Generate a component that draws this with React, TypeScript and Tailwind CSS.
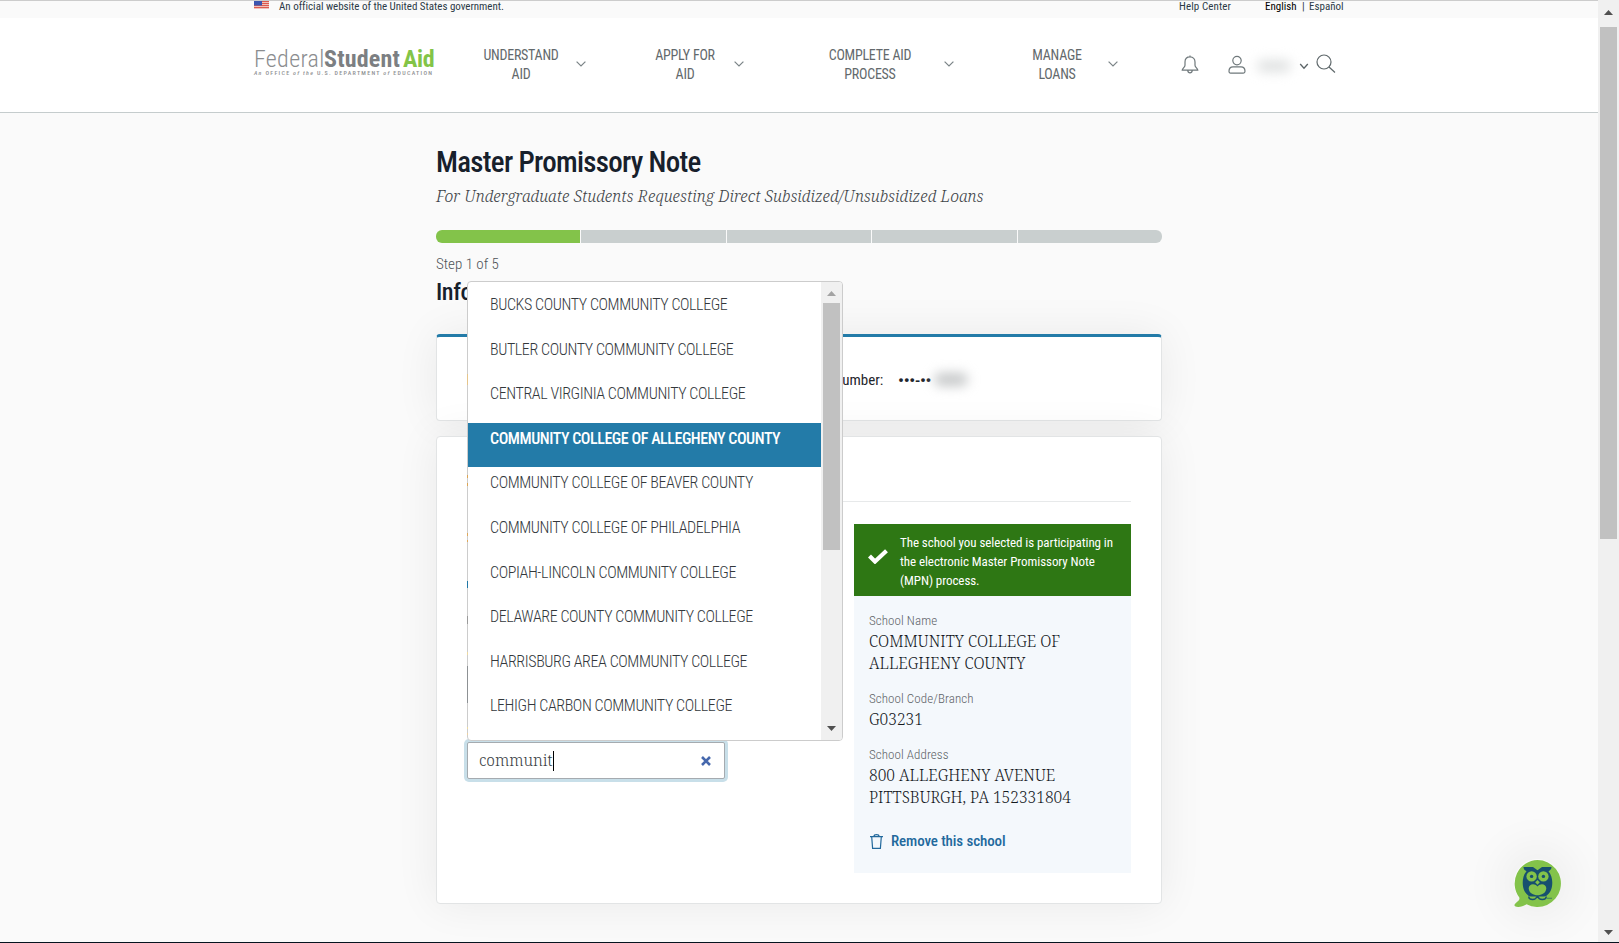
import * as React from "react";
import clsx from "clsx";

const SANS = "font-['Roboto_Condensed','Liberation_Sans',sans-serif]";
const SERIF = "font-['Noto_Serif','DejaVu_Serif_Condensed',serif]";

const NAV = [
  { lines: ["UNDERSTAND", "AID"], className: "ml-[47px] w-[78px]", chevron: "ml-[16px]" },
  { lines: ["APPLY FOR", "AID"], className: "ml-[60px] w-[78px]", chevron: "ml-[10px]" },
  { lines: ["COMPLETE AID", "PROCESS"], className: "ml-[82px] w-[88px]", chevron: "ml-[30px]" },
  { lines: ["MANAGE", "LOANS"], className: "ml-[73px] w-[60px]", chevron: "ml-[21px]" },
];

const SCHOOLS = [
  "BUCKS COUNTY COMMUNITY COLLEGE",
  "BUTLER COUNTY COMMUNITY COLLEGE",
  "CENTRAL VIRGINIA COMMUNITY COLLEGE",
  "COMMUNITY COLLEGE OF ALLEGHENY COUNTY",
  "COMMUNITY COLLEGE OF BEAVER COUNTY",
  "COMMUNITY COLLEGE OF PHILADELPHIA",
  "COPIAH-LINCOLN COMMUNITY COLLEGE",
  "DELAWARE COUNTY COMMUNITY COLLEGE",
  "HARRISBURG AREA COMMUNITY COLLEGE",
  "LEHIGH CARBON COMMUNITY COLLEGE",
];

const SELECTED = "COMMUNITY COLLEGE OF ALLEGHENY COUNTY";

function Chevron({ className }: { className?: string }) {
  return (
    <svg viewBox="0 0 10 6" className={clsx("h-[6px] w-[10px] shrink-0", className)} fill="none" stroke="#7b8487" strokeWidth="1.2">
      <path d="M0.6 0.6 5 5 9.4 0.6" />
    </svg>
  );
}

function Triangle({ up, color }: { up?: boolean; color: string }) {
  return (
    <svg viewBox="0 0 9 5" className="h-[5px] w-[9px]" fill={color}>
      <path d={up ? "M4.5 0 9 5H0z" : "M0 0H9L4.5 5z"} />
    </svg>
  );
}

function Flag() {
  return (
    <svg viewBox="0 0 15 8" className="h-[8px] w-[15px]">
      <rect width="15" height="8" fill="#f4dcd8" />
      {[0, 2, 4, 6].map((y) => (
        <rect key={y} y={y} width="15" height="1.2" fill="#dd5a4e" />
      ))}
      <rect width="8" height="4.5" fill="#3c56b0" />
    </svg>
  );
}

function UtilityBar() {
  return (
    <div className={clsx(SANS, "flex h-[18px] border-t border-[#cccccc] bg-[#fafafa] pl-[254px] text-[11px] leading-[11px] text-[#2c3a47]")}>
      <Flag />
      <span className="ml-[10px] w-[900px] tracking-[-0.02px]">An official website of the United States government.</span>
      <span className="w-[86px] tracking-[0.1px]">Help Center</span>
      <span className="w-[37px] text-black">English</span>
      <span className="w-[7px]">|</span>
      <span>Español</span>
    </div>
  );
}

function Logo() {
  return (
    <div className={clsx(SANS, "w-[181px] pt-[28px]")}>
      <div className="flex h-[24px] items-baseline text-[24px] leading-[26px] text-[#8b8d8f]">
        <span className="w-[70px] font-light tracking-[0.3px]">Federal</span>
        <span className="w-[79px] font-bold tracking-[0.2px] text-[#7c7f82]">Student</span>
        <span className="font-bold tracking-[-0.3px] text-[#83c447]">Aid</span>
      </div>
      <div className="text-[6px] leading-[6px] font-medium tracking-[1.28px] whitespace-nowrap text-[#8f9193]">
        <i>An</i> OFFICE <i>of the</i> U.S. DEPARTMENT <i>of</i> EDUCATION
      </div>
    </div>
  );
}

function Header() {
  return (
    <header className="flex h-[95px] items-start border-b border-[#c5cccd] bg-white pl-[254px]">
      <Logo />
      {NAV.map((item) => (
        <div key={item.lines[0]} className="flex items-start">
          <div
            className={clsx(
              SANS,
              "pt-[28px] text-center text-[14px] leading-[19px] tracking-[-0.25px] whitespace-nowrap text-[#63696c]",
              item.className,
            )}
          >
            {item.lines.map((line) => (
              <div key={line}>{line}</div>
            ))}
          </div>
          <Chevron className={clsx("mt-[43px]", item.chevron)} />
        </div>
      ))}
      <svg viewBox="0 0 18 20" className="mt-[37px] ml-[63px] h-[20px] w-[18px]" fill="none" stroke="#6f787b" strokeWidth="1.2">
        <path d="M9 1.9C5.8 1.9 4 4 4 7v3.200c0 2-2.800 3.200-2.800 5h15.600c0-1.800-2.800-3-2.800-5V7c0-3-1.800-5.100-5-5.100zM9 .6v1.300M6.800 15.600c.3 3 4.100 3 4.400 0" />
      </svg>
      <svg viewBox="0 0 18 20" className="mt-[37px] ml-[29px] h-[20px] w-[18px]" fill="none" stroke="#6f787b" strokeWidth="1.2">
        <circle cx="9" cy="5.6" r="4.2" />
        <path d="M1 16.300c0-2.600 1.600-4.500 4-4.500h8c2.400 0 4 1.900 4 4.500 0 1.200-.6 1.800-1.600 1.800H2.600c-1 0-1.600-.6-1.600-1.800z" />
      </svg>
      <div className="mt-[42px] ml-[11px] h-[12px] w-[34px] rounded-full bg-[#dfe1e1] blur-[6px]" />
      <svg viewBox="0 0 10 7" className="mt-[45px] ml-[8px] h-[7px] w-[10px]" fill="none" stroke="#5b6467" strokeWidth="1.3">
        <path d="M1.2 1 5 5.3 8.8 1" />
      </svg>
      <svg viewBox="0 0 20 20" className="mt-[36px] ml-[7px] size-[20px]" fill="none" stroke="#5f686b" strokeWidth="1.2">
        <circle cx="8" cy="8" r="7" />
        <path d="m13 13 6 5.5" />
      </svg>
    </header>
  );
}

function Progress() {
  return (
    <div className="mt-[23px] flex h-[13px] gap-px overflow-hidden rounded-[6px]">
      <div className="flex-1 bg-[#83c34a]" />
      {[2, 3, 4, 5].map((step) => (
        <div key={step} className="flex-1 bg-[#c9cfcf]" />
      ))}
    </div>
  );
}

// slivers of the form that stay visible along the left edge of the open menu
const EDGES = [
  "top-[92px] h-[11px] bg-[#e6c58a]",
  "top-[193px] h-[3px] bg-[#dda552]",
  "top-[201px] h-[3px] bg-[#dda552]",
  "top-[251px] h-[3px] bg-[#dfa85a]",
  "top-[258px] h-[2px] bg-[#dfa85a]",
  "top-[299px] h-[7px] bg-[#1f77a6]",
  "top-[334px] h-[8px] bg-[#9a9a9a]",
  "top-[370px] h-[3px] bg-[#ecd9a0]",
  "top-[384px] h-[37px] bg-[#8d9194]",
  "top-[445px] h-[2px] bg-[#ecd9a0]",
  "top-[451px] h-[2px] bg-[#ecd0a0]",
];

function SchoolMenu() {
  return (
    <div className="absolute bottom-full left-0 z-10 mb-px flex h-[460px] w-[376px] rounded-[4px] border border-[#cccccc] bg-white">
      <ul className={clsx(SANS, "w-[353px] pt-[7px] text-[16px] text-[#33383c]")}>
        {SCHOOLS.map((name) => (
          <li
            key={name}
            className={clsx(
              "h-[44.6px] pt-[3px] pl-[22px] leading-[26px] whitespace-nowrap",
              name === SELECTED ? "bg-[#237ba8] font-medium tracking-[-0.45px] text-white" : "font-light tracking-[-0.4px]",
            )}
          >
            {name}
          </li>
        ))}
      </ul>
      <div className="flex flex-1 flex-col items-center rounded-r-[3px] bg-[#f0f0f0] pt-[9px] pb-[9px]">
        <Triangle up color="#a3a3a3" />
        <div className="mt-[7px] h-[247px] w-[17px] bg-[#c1c1c1]" />
        <div className="mt-auto">
          <Triangle color="#505050" />
        </div>
      </div>
      {EDGES.map((edge) => (
        <span key={edge} className={clsx("absolute -left-px w-px", edge)} />
      ))}
    </div>
  );
}

function SchoolInput() {
  return (
    <div className="relative mt-[218px] w-[258px]">
      <SchoolMenu />
      <div className="flex h-[37px] items-center rounded-[2px] border border-[#a5abb0] bg-white pl-[11px] shadow-[0_0_0_3px_#c8dfe9]">
        <span className={clsx(SERIF, "text-[15.5px] leading-[21px] font-light text-[#3c4246]")}>communit</span>
        <span className="h-[20px] w-px bg-black" />
        <svg viewBox="0 0 10 10" className="mr-[13px] ml-auto size-[10px]" stroke="#4668ad" strokeWidth="2.6">
          <path d="m1 1 8 8M9 1 1 9" />
        </svg>
      </div>
    </div>
  );
}

function Field({ label, lines }: { label: string; lines: string[] }) {
  return (
    <div className="mb-[16px]">
      <div className={clsx(SANS, "text-[13px] leading-[18px] font-light tracking-[0.08px] text-[#5c6266]")}>{label}</div>
      {lines.map((line) => (
        <div key={line} className={clsx(SERIF, "text-[15.5px] leading-[22px] font-light whitespace-nowrap text-[#14191e]")}>
          {line}
        </div>
      ))}
    </div>
  );
}

function SchoolSummary() {
  return (
    <div className="w-[277px] bg-[#f4f8fc]">
      <div className="flex h-[72px] items-start bg-[#2e7714] pl-[14px]">
        <svg viewBox="0 0 20 15" className="mt-[25px] h-[15px] w-[20px]" fill="none" stroke="#fff" strokeWidth="4.2">
          <path d="m1.5 7 5.5 5.5L18.500 1.800" />
        </svg>
        <div className={clsx(SANS, "ml-[12px] pt-[9px] text-[13px] leading-[19px] tracking-[-0.07px] whitespace-nowrap text-white")}>
          <div>The school you selected is participating in</div>
          <div>the electronic Master Promissory Note</div>
          <div>(MPN) process.</div>
        </div>
      </div>
      <div className="h-[277px] pt-[16px] pl-[15px]">
        <Field label="School Name" lines={["COMMUNITY COLLEGE OF", "ALLEGHENY COUNTY"]} />
        <Field label="School Code/Branch" lines={["G03231"]} />
        <Field label="School Address" lines={["800 ALLEGHENY AVENUE", "PITTSBURGH, PA 152331804"]} />
        <div className={clsx(SANS, "mt-[23px] flex items-center text-[15px] leading-[20px] font-medium tracking-[-0.1px] text-[#22699c]")}>
          <svg viewBox="0 0 13 15" className="mr-[8px] ml-px h-[15px] w-[13px]" fill="none" stroke="#22699c" strokeWidth="1.2">
            <path d="M0 2.600h13M4 2.400c0-2.400 5-2.400 5 0M1.700 2.800l.9 11.600h7.800l.9-11.600" />
          </svg>
          Remove this school
        </div>
      </div>
    </div>
  );
}

function OwlButton() {
  return (
    <div className="absolute top-[859px] left-[1514px] rounded-full shadow-[0_0_44px_14px_rgba(0,0,0,0.05)]">
      <svg viewBox="0 0 47 48" className="h-[48px] w-[47px]">
        <path d="M23.500 1a23.500 23.500 0 1 1-11 44.300C9 47.500 4 49 1 47.200c-1.500-1.200.5-3 2.500-4.700 1.800-1.600 2.200-2.500 1.800-4A23.500 23.500 0 0 1 23.500 1z" fill="#83c34a" />
        <path d="M9.500 8h9.500l4.500 3.200L28 8h9.500c0 2-1.200 3.500-3 4.200 4.500 5 5 15 1.500 20.800-3 4.500-7 6-12.500 6S14 37.500 11 33c-3.500-5.800-3-15.800 1.500-20.800-1.800-.7-3-2.200-3-4.200z" fill="#17506f" />
        <circle cx="17.6" cy="17.4" r="5.2" fill="#83c34a" />
        <circle cx="29.4" cy="17.4" r="5.2" fill="#83c34a" />
        <circle cx="17.6" cy="17.4" r="1.7" fill="#17506f" />
        <circle cx="29.4" cy="17.4" r="1.7" fill="#17506f" />
        <path d="m23.500 21 2.300 2.300-2.300 2.500-2.300-2.500z" fill="#83c34a" />
        <path d="M23.500 27.500c3-4 9-2.500 8.800 2-.3 4.500-4.800 6.800-8.800 6.800s-8.500-2.300-8.800-6.800c-.2-4.500 5.800-6 8.800-2z" fill="#83c34a" />
        <path d="M14.800 37.500c0 4 7.800 4 7.800 0M24.400 37.500c0 4 7.800 4 7.800 0" fill="#83c34a" stroke="#17506f" strokeWidth="1.5" />
        <path d="M33 39.300h5" stroke="#4c8a5c" strokeWidth="1.2" />
      </svg>
    </div>
  );
}

function PageScrollbar() {
  return (
    <div className="flex h-[942px] w-[21px] flex-col items-center bg-[#f0f0f0] pt-[10px] pb-[7px]">
      <Triangle up color="#505050" />
      <div className="mt-[12px] h-[512px] w-[17px] bg-[#c1c1c1]" />
      <div className="mt-auto">
        <Triangle color="#505050" />
      </div>
    </div>
  );
}

export default function App() {
  return (
    <div className="relative flex h-[943px] w-[1619px] flex-col overflow-hidden bg-[#fafafa]">
      <div className="flex h-[942px] overflow-hidden">
        <div className="w-[1598px]">
          <UtilityBar />
          <Header />
          <main className="ml-[436px] w-[726px] pt-[30px]">
            <h1 className={clsx(SANS, "text-[29px] leading-[38px] font-medium tracking-[-0.7px] text-[#17202b]")}>Master Promissory Note</h1>
            <p className={clsx(SERIF, "mt-[4px] text-[16px] leading-[22px] font-light whitespace-nowrap text-[#3f4549] italic")}>
              For Undergraduate Students Requesting Direct Subsidized/Unsubsidized Loans
            </p>
            <Progress />
            <p className={clsx(SANS, "mt-[11px] text-[15px] leading-[20px] font-light text-[#4d5357]")}>Step 1 of 5</p>
            <h2 className={clsx(SANS, "mt-[4px] text-[24px] leading-[28px] font-medium tracking-[-0.4px] text-[#17202b]")}>Info</h2>

            <section className="mt-[28px] h-[87px] rounded-[4px] border border-t-[3px] border-[#e2e4e5] border-t-[#237ba8] bg-white pt-[33px] pl-[396px] shadow-[0_0_44px_rgba(0,0,0,0.07)]">
              <div className={clsx(SANS, "flex text-[15px] leading-[20px] text-[#1f262c]")}>
                <span className="w-[65px]">Number:</span>
                <span className="text-[17px] leading-[20px] font-medium tracking-[-0.3px]">•••-••</span>
                <div className="mt-[3px] ml-[3px] h-[13px] w-[34px] rounded-full bg-[#c5c7c8] blur-[6px]" />
              </div>
            </section>

            <section className="relative mt-[15px] h-[468px] rounded-[4px] border border-[#e2e4e5] bg-white px-[30px] pt-[64px] shadow-[0_0_44px_rgba(0,0,0,0.07)]">
              <div className="flex items-start justify-between border-t border-[#e7e9ea] pt-[22px]">
                <SchoolInput />
                <SchoolSummary />
              </div>
            </section>
          </main>
        </div>
        <PageScrollbar />
      </div>
      <div className="h-px bg-[#06141f]" />
      <OwlButton />
    </div>
  );
}
